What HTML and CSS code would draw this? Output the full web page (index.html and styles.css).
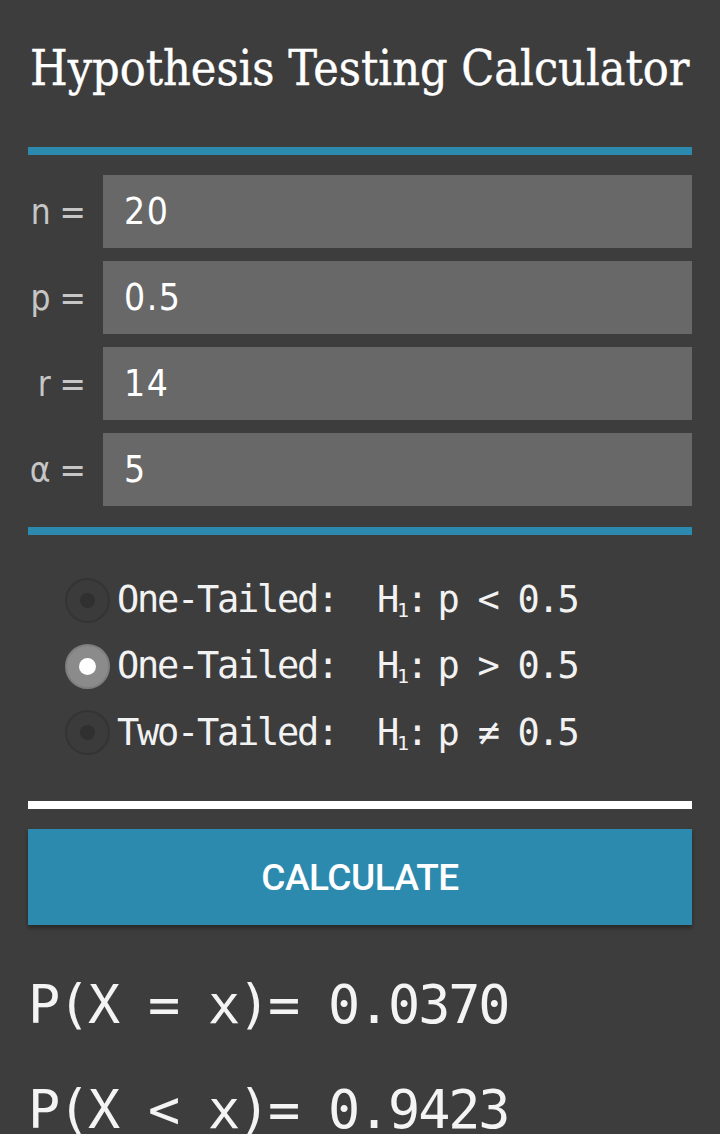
FILE: index.html
```html
<!DOCTYPE html>
<html>
<head>
<meta charset="utf-8">
<title>Hypothesis Testing Calculator</title>
<link rel="stylesheet" href="styles.css">
</head>
<body>
<div class="page">
  <h1 class="title">Hypothesis Testing Calculator</h1>
  <div class="rule rule-blue rule-top"></div>
  <div class="fields">
    <div class="field"><span class="label">n =</span><div class="input">20</div></div>
    <div class="field"><span class="label">p =</span><div class="input">0.5</div></div>
    <div class="field"><span class="label">r =</span><div class="input">14</div></div>
    <div class="field"><span class="label">α =</span><div class="input">5</div></div>
  </div>
  <div class="rule rule-blue rule-mid"></div>
  <div class="options">
    <div class="option"><span class="radio"></span><span class="otext">One-Tailed:  H<span class="sub">1</span><span class="colon">:</span> p &lt; 0.5</span></div>
    <div class="option"><span class="radio checked"></span><span class="otext">One-Tailed:  H<span class="sub">1</span><span class="colon">:</span> p &gt; 0.5</span></div>
    <div class="option"><span class="radio"></span><span class="otext">Two-Tailed:  H<span class="sub">1</span><span class="colon">:</span> p ≠ 0.5</span></div>
  </div>
  <div class="rule rule-white"></div>
  <button class="calc">CALCULATE</button>
  <div class="results">
    <div class="res">P(X = x)= 0.0370</div>
    <div class="res">P(X &lt; x)= 0.9423</div>
  </div>
</div>
</body>
</html>
```
FILE: styles.css
```css
html, body {
  margin: 0;
  padding: 0;
  background: #3d3d3d;
}
body {
  overflow: hidden;
  font-family: "DejaVu Sans", sans-serif;
}
.page {
  padding: 0 28px;
}
.title {
  margin: 38px 0 49px 2px;
  font-family: "DejaVu Serif", serif;
  font-stretch: condensed;
  font-weight: normal;
  font-size: 48px;
  line-height: 60px;
  color: #ffffff;
  white-space: nowrap;
  -webkit-text-stroke: 0.4px #ffffff;
}
.rule {
  height: 8px;
}
.rule-blue {
  background: #2c8aae;
}
.rule-white {
  background: #ffffff;
  margin-top: 35px;
}
.fields {
  margin-top: 20px;
  display: flex;
  flex-direction: column;
  gap: 13px;
}
.field {
  display: flex;
  height: 73px;
}
.label {
  width: 75px;
  flex: none;
  box-sizing: border-box;
  padding-right: 17px;
  display: flex;
  align-items: center;
  justify-content: flex-end;
  white-space: nowrap;
  word-spacing: -1px;
  font-family: "DejaVu Sans", sans-serif;
  font-stretch: condensed;
  font-size: 35px;
  color: #c6c6c6;
}
.input {
  flex: 1;
  background: #686868;
  display: flex;
  align-items: center;
  padding-left: 21px;
  font-family: "DejaVu Sans", sans-serif;
  font-stretch: condensed;
  font-size: 37px;
  color: #ffffff;
  letter-spacing: 1.5px;
}
.rule-mid {
  margin-top: 21px;
}
.options {
  margin-top: 32px;
  display: flex;
  flex-direction: column;
}
.option {
  height: 66px;
  display: flex;
  align-items: center;
  padding-left: 37px;
}
.option:nth-child(3) {
  height: 67px;
}
.radio {
  width: 45px;
  height: 45px;
  flex: none;
  box-sizing: border-box;
  border-radius: 50%;
  border: 2px solid #343434;
  background: #3b3b3b;
  display: flex;
  align-items: center;
  justify-content: center;
  margin-right: 7px;
}
.radio::after {
  content: "";
  width: 15px;
  height: 15px;
  border-radius: 50%;
  background: #303030;
}
.radio.checked {
  background: #8b8b8b;
  border-color: #7e7e7e;
}
.radio.checked::after {
  width: 17px;
  height: 17px;
  background: #ffffff;
}
.otext {
  font-family: "DejaVu Sans Mono", monospace;
  font-size: 37px;
  letter-spacing: -2.27px;
  color: #f2f2f2;
  white-space: pre;
}
.sub {
  font-size: 20px;
  letter-spacing: -3px;
  vertical-align: -5px;
}
.colon {
  letter-spacing: -11px;
}
.calc {
  display: block;
  width: 100%;
  height: 96px;
  margin: 20px 0 0;
  border: none;
  background: #2c8aae;
  color: #ffffff;
  font-family: Roboto, "Liberation Sans", sans-serif;
  font-weight: 500;
  font-size: 37px;
  letter-spacing: -0.5px;
  box-shadow: 0 3px 4px rgba(0, 0, 0, 0.35);
}
.results {
  margin-top: 27px;
}
.res {
  font-family: "DejaVu Sans Mono", monospace;
  font-size: 53.5px;
  letter-spacing: -2.2px;
  line-height: 105px;
  color: #f4f4f4;
  white-space: pre;
}
```
